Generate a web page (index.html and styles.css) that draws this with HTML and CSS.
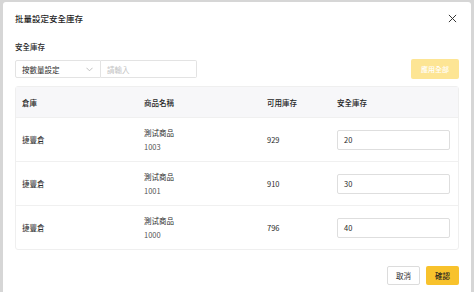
FILE: index.html
```html
<!DOCTYPE html>
<html>
<head>
  <title>批量設定安全庫存</title>
  <link rel="stylesheet" href="styles.css">
</head>

<body>
  <div class="modal">
    <div class="modal-header">
      <p class="modal-title">批量設定安全庫存</p>
      <svg class="close-icon" viewBox="0 0 10 10" width="9" height="9">
        <path d="M1 1 L9 9 M9 1 L1 9" stroke="#333" stroke-width="1.1" fill="none"/>
      </svg>
    </div>

    <p class="field-label">安全庫存</p>

    <div class="toolbar">
      <div class="combo">
        <div class="select">
          <span>按數量設定</span>
          <svg class="chevron" viewBox="0 0 8 5" width="7" height="5">
            <path d="M0.5 0.5 L4 4 L7.5 0.5" stroke="#b0b0b0" stroke-width="0.9" fill="none"/>
          </svg>
        </div>
        <div class="text-input placeholder">請輸入</div>
      </div>
      <button class="apply-button">應用全部</button>
    </div>

    <div class="stock-table">
      <div class="table-row table-head">
        <div class="cell">倉庫</div>
        <div class="cell">商品名稱</div>
        <div class="cell">可用庫存</div>
        <div class="cell">安全庫存</div>
      </div>
      <div class="table-row">
        <div class="cell">捷豐倉</div>
        <div class="cell product"><span>測试商品</span><span class="sku">1003</span></div>
        <div class="cell">929</div>
        <div class="cell"><div class="qty-input">20</div></div>
      </div>
      <div class="table-row">
        <div class="cell">捷豐倉</div>
        <div class="cell product"><span>測试商品</span><span class="sku">1001</span></div>
        <div class="cell">910</div>
        <div class="cell"><div class="qty-input">30</div></div>
      </div>
      <div class="table-row">
        <div class="cell">捷豐倉</div>
        <div class="cell product"><span>測试商品</span><span class="sku">1000</span></div>
        <div class="cell">796</div>
        <div class="cell"><div class="qty-input">40</div></div>
      </div>
    </div>

    <div class="modal-footer">
      <button class="cancel-button">取消</button>
      <button class="confirm-button">確認</button>
    </div>
  </div>
</body>
</html>
```

FILE: styles.css
```css
body {
  background-color: #d6d6d6;
  margin: 0;
  padding: 0;
  font-family: 'Noto Sans CJK TC', 'Noto Sans', sans-serif;
  color: #2a2a2a;
  overflow: hidden;
}

p {
  margin: 0;
}

.modal {
  background-color: #ffffff;
  margin: 2px 3px 0 3px;
  padding: 0 12px;
  border-radius: 3px 3px 0 0;
  height: 290px;
  box-sizing: border-box;
}

.modal-header {
  display: flex;
  justify-content: space-between;
  align-items: center;
  height: 32px;
}

.modal-title {
  font-size: 8.5px;
  font-weight: 500;
  color: #1f1f1f;
}

.close-icon {
  margin-right: 2px;
}

.field-label {
  font-size: 7.5px;
  font-weight: 500;
  line-height: 12px;
  margin-top: 7px;
  color: #2a2a2a;
}

.toolbar {
  display: flex;
  justify-content: space-between;
  align-items: center;
  height: 20px;
  margin-top: 6px;
}

.combo {
  display: flex;
}

.select, .text-input {
  height: 18px;
  box-sizing: border-box;
  border: 1px solid #e3e3e3;
  font-size: 7.5px;
  display: flex;
  align-items: center;
  padding: 0 6px;
}

.select {
  width: 86px;
  justify-content: space-between;
  border-radius: 2px 0 0 2px;
  color: #2a2a2a;
}

.chevron {
  margin-right: 1px;
}

.text-input {
  width: 96px;
  border-left: none;
  border-radius: 0 2px 2px 0;
}

.placeholder {
  color: #c4c4c4;
}

.apply-button {
  width: 48px;
  height: 20px;
  border: none;
  border-radius: 2px;
  background-color: #fde594;
  color: #ffffff;
  font-family: inherit;
  font-size: 7px;
  font-weight: 500;
  padding: 0;
}

.stock-table {
  margin-top: 7px;
  border: 1px solid #efefef;
  border-radius: 3px;
}

.table-row {
  display: grid;
  grid-template-columns: 122px 123px 70px 1fr;
  height: 44px;
  border-top: 1px solid #f0f0f0;
  box-sizing: border-box;
  font-size: 7.5px;
}

.table-head {
  height: 30px;
  border-top: none;
  background-color: #f7f7f9;
  font-weight: 500;
  color: #1f1f1f;
}

.cell {
  display: flex;
  align-items: center;
  padding-left: 6px;
}

.product {
  flex-direction: column;
  align-items: flex-start;
  justify-content: center;
  gap: 3px;
}

.sku {
  color: #555;
}

.qty-input {
  width: 113px;
  height: 20px;
  box-sizing: border-box;
  border: 1px solid #dedede;
  border-radius: 2px;
  display: flex;
  align-items: center;
  padding-left: 6px;
  color: #2a2a2a;
}

.modal-footer {
  display: flex;
  justify-content: flex-end;
  gap: 6px;
  margin-top: 16px;
}

.cancel-button, .confirm-button {
  height: 19px;
  width: 33px;
  border-radius: 2px;
  font-family: inherit;
  font-size: 7.5px;
  padding: 0;
}

.cancel-button {
  background-color: #ffffff;
  border: 1px solid #dcdcdc;
  color: #2a2a2a;
}

.confirm-button {
  background-color: #f8c22c;
  border: none;
  color: #1f1f1f;
  font-weight: 500;
}
```
